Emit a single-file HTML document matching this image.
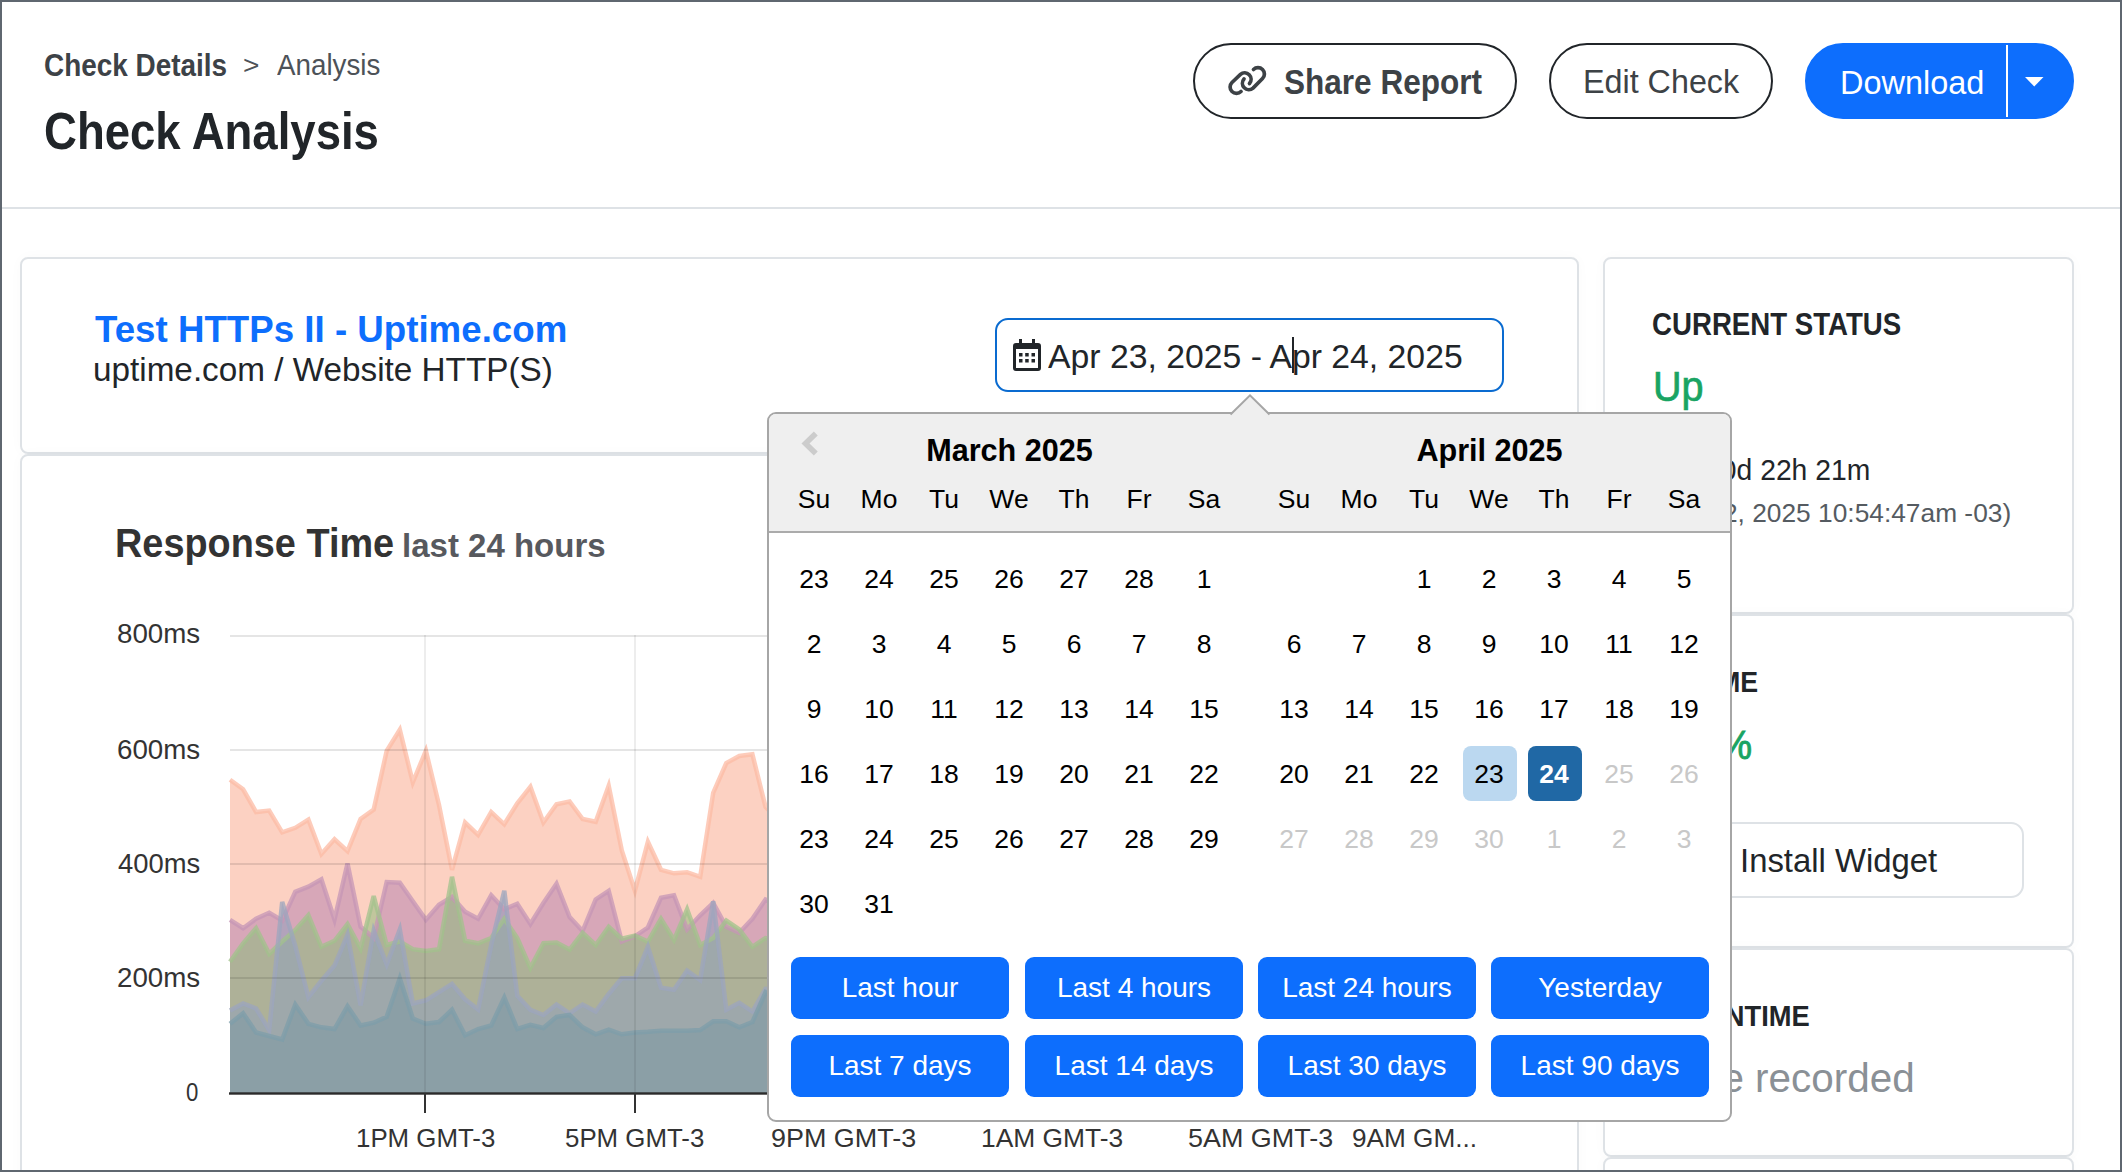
<!DOCTYPE html>
<html><head><meta charset="utf-8">
<style>
*{box-sizing:border-box;margin:0;padding:0}
html,body{width:2122px;height:1172px;overflow:hidden;background:#fff}
body{font-family:"Liberation Sans",sans-serif;position:relative;color:#212529}
.frame{position:absolute;left:0;top:0;width:2122px;height:1172px;border:2px solid #5f6770;z-index:100;pointer-events:none}
.tx{position:absolute;white-space:nowrap;transform-origin:0 0}
.hdr-line{position:absolute;left:2px;top:207px;width:2120px;height:2px;background:#dee2e6}
.btn{position:absolute;top:43px;height:76px;border:2px solid #212529;border-radius:38px}
.card{position:absolute;border:2px solid #dee2e6;border-radius:8px;background:#fff;box-shadow:0 0 14px rgba(0,0,0,0.025)}
.cal{position:absolute;border:2px solid #a6a6a6;border-radius:9px;background:#fff;z-index:20}
.calhead{position:absolute;background:#efefef;border-bottom:2px solid #ababab;border-radius:7px 7px 0 0;z-index:20}
.ctitle{position:absolute;text-align:center;font-size:30.6px;line-height:40px;font-weight:700;color:#000;z-index:22}
.cday{position:absolute;width:65px;text-align:center;font-size:26.5px;line-height:36px;color:#000;z-index:22}
.cdate{position:absolute;width:65px;text-align:center;font-size:26.5px;line-height:36px;color:#000;z-index:22}
.cdate.dis{color:#c8c8c8}
.cdate.sel1::before,.cdate.sel2::before{content:"";position:absolute;left:6.6px;top:-9.5px;width:53.7px;height:55px;border-radius:8px;z-index:-1}
.cdate.sel1::before{background:#bbd8f0}
.cdate.sel2{color:#fff;font-weight:700}
.cdate.sel2::before{background:#2068a5}
.cbtn{position:absolute;width:218px;height:62px;border-radius:9px;background:#0d6efd;color:#fff;font-size:28px;line-height:62px;text-align:center;z-index:22}
</style></head><body>
<div class="frame"></div>
<div class="btn" style="left:1193px;width:324px"></div>
<div class="btn" style="left:1549px;width:224px"></div>
<div class="btn" style="left:1805px;width:269px;background:#0d6efd;border-color:#0d6efd"></div>
<div style="position:absolute;left:2006px;top:45px;width:2px;height:72px;background:#fff;z-index:6"></div>
<svg style="position:absolute;left:2025px;top:77px;z-index:6" width="19" height="10"><polygon points="0,0 18.5,0 9.25,9.5" fill="#fff"/></svg>
<svg style="position:absolute;left:1220px;top:58px;z-index:6" width="55" height="45" viewBox="0 0 55 45"><g fill="none" stroke="#3d4246" stroke-width="3.7" stroke-linecap="round"><path d="M29.5,25.5 A6.4,6.4 0 0 0 20.47,16.47 L11.97,24.47 A6.4,6.4 0 0 0 21.03,33.53"/><path d="M24.0,21.0 A6.4,6.4 0 0 0 33.03,30.03 L42.53,20.53 A6.4,6.4 0 0 0 33.47,11.47"/></g></svg>
<div class="hdr-line"></div>

<div class="card" style="left:20px;top:257px;width:1559px;height:197px"></div>
<div class="card" style="left:20px;top:454px;width:1559px;height:800px"></div>
<div class="card" style="left:1603px;top:257px;width:471px;height:357px"></div>
<div class="card" style="left:1603px;top:614px;width:471px;height:334px"></div>
<div class="card" style="left:1603px;top:948px;width:471px;height:209px"></div>
<div class="card" style="left:1603px;top:1157px;width:471px;height:200px"></div>

<div style="position:absolute;left:995px;top:318px;width:509px;height:74px;border:2px solid #0a6bd0;border-radius:13px;z-index:4"></div>
<svg style="position:absolute;left:1013px;top:339px;z-index:5" width="28" height="32" viewBox="0 0 28 32"><path d="M6,0 h3 v4 h10 v-4 h3 v4 h3 a3,3 0 0 1 3,3 v22 a3,3 0 0 1 -3,3 h-22 a3,3 0 0 1 -3,-3 v-22 a3,3 0 0 1 3,-3 h3 z M3,10 v19 h22 v-19 z" fill="#212529"/><g fill="#212529"><rect x="6" y="14" width="3.5" height="3.5"/><rect x="12.2" y="14" width="3.5" height="3.5"/><rect x="18.5" y="14" width="3.5" height="3.5"/><rect x="6" y="20" width="3.5" height="3.5"/><rect x="12.2" y="20" width="3.5" height="3.5"/><rect x="18.5" y="20" width="3.5" height="3.5"/></g></svg>
<div style="position:absolute;left:1292px;top:337px;width:2px;height:36px;background:#212529;z-index:6"></div>
<div style="position:absolute;left:1653px;top:822px;width:371px;height:76px;border:2px solid #dee2e6;border-radius:13px;z-index:4"></div>
<svg class="abs0" width="2122" height="1172" style="position:absolute;left:0;top:0;z-index:3">
<polygon points="230,1093 230.0,779.8 243.1,789.3 256.1,812.0 269.2,810.6 282.2,832.3 295.3,827.8 308.4,819.7 321.4,854.0 334.5,839.3 347.5,851.2 360.6,819.0 373.7,809.6 386.7,750.8 399.8,729.8 412.8,782.3 425.9,750.8 439.0,805.0 452.0,869.8 465.1,822.5 478.1,834.8 491.2,812.0 504.3,824.3 517.3,803.3 530.4,786.8 543.4,822.5 556.5,804.3 569.6,801.5 582.6,819.0 595.7,821.8 608.7,785.8 621.8,850.5 634.9,890.8 647.9,841.8 661.0,869.8 674.0,873.3 687.1,872.2 700.2,876.8 713.2,792.8 726.3,763.0 739.3,756.0 752.4,754.3 765.5,806.8 778.5,820.0 778.5,1093" fill="#f99a77" fill-opacity="0.45"/>
<polygon points="230,1093 230.0,919.8 243.1,928.2 256.1,918.8 269.2,912.8 282.2,920.5 295.3,891.8 308.4,886.6 321.4,879.2 334.5,919.5 347.5,863.5 360.6,926.8 373.7,938.0 386.7,882.0 399.8,882.7 412.8,901.3 425.9,919.8 439.0,904.8 452.0,897.0 465.1,911.8 478.1,918.8 491.2,895.3 504.3,909.3 517.3,903.7 530.4,924.0 543.4,903.0 556.5,883.8 569.6,917.0 582.6,931.0 595.7,899.5 608.7,890.8 621.8,941.5 634.9,936.3 647.9,927.5 661.0,897.8 674.0,895.3 687.1,929.3 700.2,915.3 713.2,903.0 726.3,926.8 739.3,932.8 752.4,918.8 765.5,899.5 778.5,905.0 778.5,1093" fill="#b27eae" fill-opacity="0.5"/>
<polygon points="230,1093 230.0,961.8 243.1,943.3 256.1,928.2 269.2,953.8 282.2,941.5 295.3,930.0 308.4,915.3 321.4,946.8 334.5,940.8 347.5,924.0 360.6,948.5 373.7,896.0 386.7,945.0 399.8,941.5 412.8,949.2 425.9,951.0 439.0,949.2 452.0,876.8 465.1,940.8 478.1,943.3 491.2,938.0 504.3,918.8 517.3,938.0 530.4,967.8 543.4,943.3 556.5,942.6 569.6,949.6 582.6,932.8 595.7,945.0 608.7,926.8 621.8,938.7 634.9,935.6 647.9,941.5 661.0,918.8 674.0,939.8 687.1,909.3 700.2,945.0 713.2,938.0 726.3,920.5 739.3,929.3 752.4,946.8 765.5,938.0 778.5,940.0 778.5,1093" fill="#86bb78" fill-opacity="0.5"/>
<polygon points="230,1093 230.0,1010.5 243.1,1003.4 256.1,1008.5 269.2,1030.0 282.2,902.0 295.3,946.0 308.4,997.2 321.4,980.8 334.5,965.5 347.5,934.7 360.6,1005.4 373.7,930.7 386.7,964.4 399.8,929.6 412.8,1003.4 425.9,1000.3 439.0,992.1 452.0,983.9 465.1,999.3 478.1,1009.5 491.2,945.0 504.3,890.8 517.3,995.8 530.4,1009.8 543.4,1015.0 556.5,1004.5 569.6,1013.3 582.6,1004.5 595.7,1011.5 608.7,994.0 621.8,978.3 634.9,978.3 647.9,946.8 661.0,987.7 674.0,989.8 687.1,970.6 700.2,980.0 713.2,901.3 726.3,1009.8 739.3,1002.8 752.4,1011.5 765.5,988.8 778.5,990.0 778.5,1093" fill="#8d9fbd" fill-opacity="0.5"/>
<polygon points="230,1093 230.0,1023.8 243.1,1013.3 256.1,1032.5 269.2,1036.0 282.2,1039.5 295.3,1004.5 308.4,1023.8 321.4,1027.3 334.5,1029.0 347.5,1006.3 360.6,1025.5 373.7,1022.7 386.7,1016.8 399.8,978.3 412.8,1018.5 425.9,1023.8 439.0,1022.0 452.0,1009.8 465.1,1035.3 478.1,1029.0 491.2,1025.5 504.3,997.5 517.3,1029.0 530.4,1024.8 543.4,1028.0 556.5,1016.8 569.6,1015.0 582.6,1027.3 595.7,1034.3 608.7,1029.7 621.8,1034.3 634.9,1032.5 647.9,1031.8 661.0,1030.8 674.0,1030.8 687.1,1030.8 700.2,1030.0 713.2,1021.3 726.3,1021.3 739.3,1027.3 752.4,1022.0 765.5,992.3 778.5,1000.0 778.5,1093" fill="#7796a1" fill-opacity="0.5"/>
<polyline points="230.0,779.8 243.1,789.3 256.1,812.0 269.2,810.6 282.2,832.3 295.3,827.8 308.4,819.7 321.4,854.0 334.5,839.3 347.5,851.2 360.6,819.0 373.7,809.6 386.7,750.8 399.8,729.8 412.8,782.3 425.9,750.8 439.0,805.0 452.0,869.8 465.1,822.5 478.1,834.8 491.2,812.0 504.3,824.3 517.3,803.3 530.4,786.8 543.4,822.5 556.5,804.3 569.6,801.5 582.6,819.0 595.7,821.8 608.7,785.8 621.8,850.5 634.9,890.8 647.9,841.8 661.0,869.8 674.0,873.3 687.1,872.2 700.2,876.8 713.2,792.8 726.3,763.0 739.3,756.0 752.4,754.3 765.5,806.8 778.5,820.0" fill="none" stroke="#fcbba4" stroke-opacity="0.75" stroke-width="4.5" stroke-linejoin="miter"/>
<polyline points="230.0,919.8 243.1,928.2 256.1,918.8 269.2,912.8 282.2,920.5 295.3,891.8 308.4,886.6 321.4,879.2 334.5,919.5 347.5,863.5 360.6,926.8 373.7,938.0 386.7,882.0 399.8,882.7 412.8,901.3 425.9,919.8 439.0,904.8 452.0,897.0 465.1,911.8 478.1,918.8 491.2,895.3 504.3,909.3 517.3,903.7 530.4,924.0 543.4,903.0 556.5,883.8 569.6,917.0 582.6,931.0 595.7,899.5 608.7,890.8 621.8,941.5 634.9,936.3 647.9,927.5 661.0,897.8 674.0,895.3 687.1,929.3 700.2,915.3 713.2,903.0 726.3,926.8 739.3,932.8 752.4,918.8 765.5,899.5 778.5,905.0" fill="none" stroke="#c596b6" stroke-opacity="0.75" stroke-width="4.5" stroke-linejoin="miter"/>
<polyline points="230.0,961.8 243.1,943.3 256.1,928.2 269.2,953.8 282.2,941.5 295.3,930.0 308.4,915.3 321.4,946.8 334.5,940.8 347.5,924.0 360.6,948.5 373.7,896.0 386.7,945.0 399.8,941.5 412.8,949.2 425.9,951.0 439.0,949.2 452.0,876.8 465.1,940.8 478.1,943.3 491.2,938.0 504.3,918.8 517.3,938.0 530.4,967.8 543.4,943.3 556.5,942.6 569.6,949.6 582.6,932.8 595.7,945.0 608.7,926.8 621.8,938.7 634.9,935.6 647.9,941.5 661.0,918.8 674.0,939.8 687.1,909.3 700.2,945.0 713.2,938.0 726.3,920.5 739.3,929.3 752.4,946.8 765.5,938.0 778.5,940.0" fill="none" stroke="#a2c28c" stroke-opacity="0.75" stroke-width="4.5" stroke-linejoin="miter"/>
<polyline points="230.0,1010.5 243.1,1003.4 256.1,1008.5 269.2,1030.0 282.2,902.0 295.3,946.0 308.4,997.2 321.4,980.8 334.5,965.5 347.5,934.7 360.6,1005.4 373.7,930.7 386.7,964.4 399.8,929.6 412.8,1003.4 425.9,1000.3 439.0,992.1 452.0,983.9 465.1,999.3 478.1,1009.5 491.2,945.0 504.3,890.8 517.3,995.8 530.4,1009.8 543.4,1015.0 556.5,1004.5 569.6,1013.3 582.6,1004.5 595.7,1011.5 608.7,994.0 621.8,978.3 634.9,978.3 647.9,946.8 661.0,987.7 674.0,989.8 687.1,970.6 700.2,980.0 713.2,901.3 726.3,1009.8 739.3,1002.8 752.4,1011.5 765.5,988.8 778.5,990.0" fill="none" stroke="#9ca5bd" stroke-opacity="0.75" stroke-width="4.5" stroke-linejoin="miter"/>
<polyline points="230.0,1023.8 243.1,1013.3 256.1,1032.5 269.2,1036.0 282.2,1039.5 295.3,1004.5 308.4,1023.8 321.4,1027.3 334.5,1029.0 347.5,1006.3 360.6,1025.5 373.7,1022.7 386.7,1016.8 399.8,978.3 412.8,1018.5 425.9,1023.8 439.0,1022.0 452.0,1009.8 465.1,1035.3 478.1,1029.0 491.2,1025.5 504.3,997.5 517.3,1029.0 530.4,1024.8 543.4,1028.0 556.5,1016.8 569.6,1015.0 582.6,1027.3 595.7,1034.3 608.7,1029.7 621.8,1034.3 634.9,1032.5 647.9,1031.8 661.0,1030.8 674.0,1030.8 687.1,1030.8 700.2,1030.0 713.2,1021.3 726.3,1021.3 739.3,1027.3 752.4,1022.0 765.5,992.3 778.5,1000.0" fill="none" stroke="#7d9ea9" stroke-opacity="0.75" stroke-width="4.5" stroke-linejoin="miter"/>
<rect x="230" y="635" width="1260" height="2" fill="#000" fill-opacity="0.1"/>
<rect x="230" y="749" width="1260" height="2" fill="#000" fill-opacity="0.1"/>
<rect x="230" y="863" width="1260" height="2" fill="#000" fill-opacity="0.1"/>
<rect x="230" y="977" width="1260" height="2" fill="#000" fill-opacity="0.1"/>
<rect x="424" y="635" width="2" height="458" fill="#000" fill-opacity="0.07"/>
<rect x="634" y="635" width="2" height="458" fill="#000" fill-opacity="0.07"/>
<rect x="842" y="635" width="2" height="458" fill="#000" fill-opacity="0.07"/>
<rect x="1051" y="635" width="2" height="458" fill="#000" fill-opacity="0.07"/>
<rect x="1260" y="635" width="2" height="458" fill="#000" fill-opacity="0.07"/>
<rect x="1469" y="635" width="2" height="458" fill="#000" fill-opacity="0.07"/>
<rect x="229" y="1092.3" width="1262" height="2.4" fill="#2b2b2b"/>
<rect x="424" y="1093" width="2" height="20" fill="#333"/>
<rect x="634" y="1093" width="2" height="20" fill="#333"/>
<rect x="842" y="1093" width="2" height="20" fill="#333"/>
<rect x="1051" y="1093" width="2" height="20" fill="#333"/>
<rect x="1260" y="1093" width="2" height="20" fill="#333"/>
<rect x="1469" y="1093" width="2" height="20" fill="#333"/>
</svg>
<div id="t_cd" class="tx" style="left:44.08px;top:50.06px;font-size:30.52px;line-height:30.52px;font-weight:700;color:#3d4247;transform:scaleX(0.9146);z-index:5;">Check Details</div>
<div id="t_gt" class="tx" style="left:243.32px;top:52.05px;font-size:26.52px;line-height:26.52px;font-weight:400;color:#4d5258;transform:scaleX(1.0591);z-index:5;">></div>
<div id="t_an" class="tx" style="left:276.87px;top:51.16px;font-size:28.63px;line-height:28.63px;font-weight:400;color:#4d5258;transform:scaleX(0.9702);z-index:5;">Analysis</div>
<div id="t_title" class="tx" style="left:44.22px;top:105.67px;font-size:51.31px;line-height:51.31px;font-weight:700;color:#212529;transform:scaleX(0.8877);z-index:5;">Check Analysis</div>
<div id="t_share" class="tx" style="left:1284.09px;top:64.72px;font-size:34.59px;line-height:34.59px;font-weight:700;color:#3d4246;transform:scaleX(0.9120);z-index:5;">Share Report</div>
<div id="t_edit" class="tx" style="left:1583.05px;top:65.45px;font-size:33.14px;line-height:33.14px;font-weight:400;color:#3d4246;transform:scaleX(0.9747);z-index:5;">Edit Check</div>
<div id="t_dl" class="tx" style="left:1839.93px;top:65.75px;font-size:33.14px;line-height:33.14px;font-weight:400;color:#ffffff;transform:scaleX(0.9804);z-index:5;">Download</div>
<div id="t_name" class="tx" style="left:95.00px;top:310.71px;font-size:37.79px;line-height:37.79px;font-weight:700;color:#0d6efd;transform:scaleX(0.9711);z-index:5;">Test HTTPs II - Uptime.com</div>
<div id="t_sub" class="tx" style="left:92.96px;top:353.94px;font-size:32.56px;line-height:32.56px;font-weight:400;color:#212529;transform:scaleX(1.0224);z-index:5;">uptime.com / Website HTTP(S)</div>
<div id="t_date" class="tx" style="left:1048.00px;top:340.40px;font-size:33.43px;line-height:33.43px;font-weight:400;color:#212529;transform:scaleX(1.0098);z-index:5;">Apr 23, 2025 - Apr 24, 2025</div>
<div id="t_rt" class="tx" style="left:115.02px;top:524.09px;font-size:39.83px;line-height:39.83px;font-weight:700;color:#333333;transform:scaleX(0.9505);z-index:5;">Response Time</div>
<div id="t_l24" class="tx" style="left:402.22px;top:529.18px;font-size:33.81px;line-height:33.81px;font-weight:700;color:#57595e;transform:scaleX(0.9767);z-index:5;">last 24 hours</div>
<div id="t_y800ms" class="tx" style="left:116.89px;top:621.02px;font-size:26.79px;line-height:26.79px;font-weight:400;color:#333333;transform:scaleX(1.0354);z-index:5;">800ms</div>
<div id="t_y600ms" class="tx" style="left:116.87px;top:737.12px;font-size:26.79px;line-height:26.79px;font-weight:400;color:#333333;transform:scaleX(1.0355);z-index:5;">600ms</div>
<div id="t_y400ms" class="tx" style="left:117.90px;top:851.22px;font-size:26.79px;line-height:26.79px;font-weight:400;color:#333333;transform:scaleX(1.0226);z-index:5;">400ms</div>
<div id="t_y200ms" class="tx" style="left:116.89px;top:965.32px;font-size:26.79px;line-height:26.79px;font-weight:400;color:#333333;transform:scaleX(1.0354);z-index:5;">200ms</div>
<div id="t_y0" class="tx" style="left:185.94px;top:1079.67px;font-size:25.79px;line-height:25.79px;font-weight:400;color:#333333;transform:scaleX(0.8613);z-index:5;">0</div>
<div id="t_x1" class="tx" style="left:355.60px;top:1125.79px;font-size:25.64px;line-height:25.64px;font-weight:400;color:#333333;transform:scaleX(1.0089);z-index:5;">1PM GMT-3</div>
<div id="t_x2" class="tx" style="left:564.61px;top:1125.79px;font-size:25.64px;line-height:25.64px;font-weight:400;color:#333333;transform:scaleX(1.0088);z-index:5;">5PM GMT-3</div>
<div id="t_x3" class="tx" style="left:771.36px;top:1125.79px;font-size:25.64px;line-height:25.64px;font-weight:400;color:#333333;transform:scaleX(1.0512);z-index:5;">9PM GMT-3</div>
<div id="t_x4" class="tx" style="left:980.67px;top:1125.79px;font-size:25.64px;line-height:25.64px;font-weight:400;color:#333333;transform:scaleX(1.0292);z-index:5;">1AM GMT-3</div>
<div id="t_x5" class="tx" style="left:1188.18px;top:1125.79px;font-size:25.64px;line-height:25.64px;font-weight:400;color:#333333;transform:scaleX(1.0511);z-index:5;">5AM GMT-3</div>
<div id="t_x6" class="tx" style="left:1351.89px;top:1125.79px;font-size:25.64px;line-height:25.64px;font-weight:400;color:#333333;transform:scaleX(1.0217);z-index:5;">9AM GM...</div>
<div id="t_cs" class="tx" style="left:1652.42px;top:308.97px;font-size:31.10px;line-height:31.10px;font-weight:700;color:#212529;transform:scaleX(0.8889);z-index:5;">CURRENT STATUS</div>
<div id="t_up" class="tx" style="left:1653.32px;top:366.39px;font-size:41.72px;line-height:41.72px;font-weight:400;color:#19a463;transform:scaleX(0.9483);z-index:5;-webkit-text-stroke:0.7px #19a463">Up</div>
<div id="t_dur" class="tx" style="left:1636.03px;top:456.22px;font-size:28.57px;line-height:28.57px;font-weight:400;color:#212529;transform:scaleX(0.9900);z-index:5;">Up for 0d 22h 21m</div>
<div id="t_since" class="tx" style="left:1583.60px;top:501.28px;font-size:25.07px;line-height:25.07px;font-weight:400;color:#555b61;transform:scaleX(1.0500);z-index:5;">(since Apr 22, 2025 10:54:47am -03)</div>
<div id="t_upt" class="tx" style="left:1657.13px;top:668.46px;font-size:28.63px;line-height:28.63px;font-weight:700;color:#212529;transform:scaleX(0.9350);z-index:5;">UPTIME</div>
<div id="t_pct" class="tx" style="left:1601.76px;top:725.56px;font-size:39.97px;line-height:39.97px;font-weight:400;color:#19a463;transform:scaleX(0.9500);z-index:5;-webkit-text-stroke:0.9px #19a463">100.00%</div>
<div id="t_iw" class="tx" style="left:1739.52px;top:844.47px;font-size:32.99px;line-height:32.99px;font-weight:400;color:#212529;transform:scaleX(0.9959);z-index:5;">Install Widget</div>
<div id="t_dt" class="tx" style="left:1657.84px;top:1002.07px;font-size:29.22px;line-height:29.22px;font-weight:700;color:#212529;transform:scaleX(0.9350);z-index:5;">DOWNTIME</div>
<div id="t_nd" class="tx" style="left:1508.21px;top:1058.12px;font-size:40.85px;line-height:40.85px;font-weight:400;color:#8a9096;transform:scaleX(0.9900);z-index:5;">No downtime recorded</div>
<div class="cal" style="left:767px;top:412px;width:964.5px;height:710px"></div>
<div class="calhead" style="left:769px;top:414px;width:960.5px;height:119px"></div>
<svg style="position:absolute;left:1228px;top:390px;z-index:21" width="44" height="30"><polygon points="3,25 22,5 41,25" fill="#efefef"/><rect x="4.5" y="21.5" width="35" height="4" fill="#efefef"/><polyline points="2.5,24.5 22,5.3 41.5,24.5" fill="none" stroke="#a6a6a6" stroke-width="2"/></svg>
<svg style="position:absolute;left:798px;top:428px;z-index:22" width="24" height="32"><polyline points="17.8,5.5 7.5,15.5 17.8,25.5" fill="none" stroke="#cccccc" stroke-width="5.6"/></svg>
<div class="ctitle" style="left:809.5px;top:429.8px;width:400px">March 2025</div>
<div class="cday" style="left:781.5px;top:480.5px">Su</div>
<div class="cday" style="left:846.5px;top:480.5px">Mo</div>
<div class="cday" style="left:911.5px;top:480.5px">Tu</div>
<div class="cday" style="left:976.5px;top:480.5px">We</div>
<div class="cday" style="left:1041.5px;top:480.5px">Th</div>
<div class="cday" style="left:1106.5px;top:480.5px">Fr</div>
<div class="cday" style="left:1171.5px;top:480.5px">Sa</div>
<div class="cdate o" style="left:781.5px;top:560.5px">23</div>
<div class="cdate o" style="left:846.5px;top:560.5px">24</div>
<div class="cdate o" style="left:911.5px;top:560.5px">25</div>
<div class="cdate o" style="left:976.5px;top:560.5px">26</div>
<div class="cdate o" style="left:1041.5px;top:560.5px">27</div>
<div class="cdate o" style="left:1106.5px;top:560.5px">28</div>
<div class="cdate n" style="left:1171.5px;top:560.5px">1</div>
<div class="cdate n" style="left:781.5px;top:625.5px">2</div>
<div class="cdate n" style="left:846.5px;top:625.5px">3</div>
<div class="cdate n" style="left:911.5px;top:625.5px">4</div>
<div class="cdate n" style="left:976.5px;top:625.5px">5</div>
<div class="cdate n" style="left:1041.5px;top:625.5px">6</div>
<div class="cdate n" style="left:1106.5px;top:625.5px">7</div>
<div class="cdate n" style="left:1171.5px;top:625.5px">8</div>
<div class="cdate n" style="left:781.5px;top:690.5px">9</div>
<div class="cdate n" style="left:846.5px;top:690.5px">10</div>
<div class="cdate n" style="left:911.5px;top:690.5px">11</div>
<div class="cdate n" style="left:976.5px;top:690.5px">12</div>
<div class="cdate n" style="left:1041.5px;top:690.5px">13</div>
<div class="cdate n" style="left:1106.5px;top:690.5px">14</div>
<div class="cdate n" style="left:1171.5px;top:690.5px">15</div>
<div class="cdate n" style="left:781.5px;top:755.5px">16</div>
<div class="cdate n" style="left:846.5px;top:755.5px">17</div>
<div class="cdate n" style="left:911.5px;top:755.5px">18</div>
<div class="cdate n" style="left:976.5px;top:755.5px">19</div>
<div class="cdate n" style="left:1041.5px;top:755.5px">20</div>
<div class="cdate n" style="left:1106.5px;top:755.5px">21</div>
<div class="cdate n" style="left:1171.5px;top:755.5px">22</div>
<div class="cdate n" style="left:781.5px;top:820.5px">23</div>
<div class="cdate n" style="left:846.5px;top:820.5px">24</div>
<div class="cdate n" style="left:911.5px;top:820.5px">25</div>
<div class="cdate n" style="left:976.5px;top:820.5px">26</div>
<div class="cdate n" style="left:1041.5px;top:820.5px">27</div>
<div class="cdate n" style="left:1106.5px;top:820.5px">28</div>
<div class="cdate n" style="left:1171.5px;top:820.5px">29</div>
<div class="cdate n" style="left:781.5px;top:885.5px">30</div>
<div class="cdate n" style="left:846.5px;top:885.5px">31</div>
<div class="ctitle" style="left:1289.5px;top:429.8px;width:400px">April 2025</div>
<div class="cday" style="left:1261.5px;top:480.5px">Su</div>
<div class="cday" style="left:1326.5px;top:480.5px">Mo</div>
<div class="cday" style="left:1391.5px;top:480.5px">Tu</div>
<div class="cday" style="left:1456.5px;top:480.5px">We</div>
<div class="cday" style="left:1521.5px;top:480.5px">Th</div>
<div class="cday" style="left:1586.5px;top:480.5px">Fr</div>
<div class="cday" style="left:1651.5px;top:480.5px">Sa</div>
<div class="cdate n" style="left:1391.5px;top:560.5px">1</div>
<div class="cdate n" style="left:1456.5px;top:560.5px">2</div>
<div class="cdate n" style="left:1521.5px;top:560.5px">3</div>
<div class="cdate n" style="left:1586.5px;top:560.5px">4</div>
<div class="cdate n" style="left:1651.5px;top:560.5px">5</div>
<div class="cdate n" style="left:1261.5px;top:625.5px">6</div>
<div class="cdate n" style="left:1326.5px;top:625.5px">7</div>
<div class="cdate n" style="left:1391.5px;top:625.5px">8</div>
<div class="cdate n" style="left:1456.5px;top:625.5px">9</div>
<div class="cdate n" style="left:1521.5px;top:625.5px">10</div>
<div class="cdate n" style="left:1586.5px;top:625.5px">11</div>
<div class="cdate n" style="left:1651.5px;top:625.5px">12</div>
<div class="cdate n" style="left:1261.5px;top:690.5px">13</div>
<div class="cdate n" style="left:1326.5px;top:690.5px">14</div>
<div class="cdate n" style="left:1391.5px;top:690.5px">15</div>
<div class="cdate n" style="left:1456.5px;top:690.5px">16</div>
<div class="cdate n" style="left:1521.5px;top:690.5px">17</div>
<div class="cdate n" style="left:1586.5px;top:690.5px">18</div>
<div class="cdate n" style="left:1651.5px;top:690.5px">19</div>
<div class="cdate n" style="left:1261.5px;top:755.5px">20</div>
<div class="cdate n" style="left:1326.5px;top:755.5px">21</div>
<div class="cdate n" style="left:1391.5px;top:755.5px">22</div>
<div class="cdate sel1" style="left:1456.5px;top:755.5px">23</div>
<div class="cdate sel2" style="left:1521.5px;top:755.5px">24</div>
<div class="cdate dis" style="left:1586.5px;top:755.5px">25</div>
<div class="cdate dis" style="left:1651.5px;top:755.5px">26</div>
<div class="cdate dis" style="left:1261.5px;top:820.5px">27</div>
<div class="cdate dis" style="left:1326.5px;top:820.5px">28</div>
<div class="cdate dis" style="left:1391.5px;top:820.5px">29</div>
<div class="cdate dis" style="left:1456.5px;top:820.5px">30</div>
<div class="cdate dis" style="left:1521.5px;top:820.5px">1</div>
<div class="cdate dis" style="left:1586.5px;top:820.5px">2</div>
<div class="cdate dis" style="left:1651.5px;top:820.5px">3</div>
<div class="cbtn" style="left:791.0px;top:957px">Last hour</div>
<div class="cbtn" style="left:1025.0px;top:957px">Last 4 hours</div>
<div class="cbtn" style="left:1258.0px;top:957px">Last 24 hours</div>
<div class="cbtn" style="left:1491.0px;top:957px">Yesterday</div>
<div class="cbtn" style="left:791.0px;top:1035px">Last 7 days</div>
<div class="cbtn" style="left:1025.0px;top:1035px">Last 14 days</div>
<div class="cbtn" style="left:1258.0px;top:1035px">Last 30 days</div>
<div class="cbtn" style="left:1491.0px;top:1035px">Last 90 days</div>
</body></html>
